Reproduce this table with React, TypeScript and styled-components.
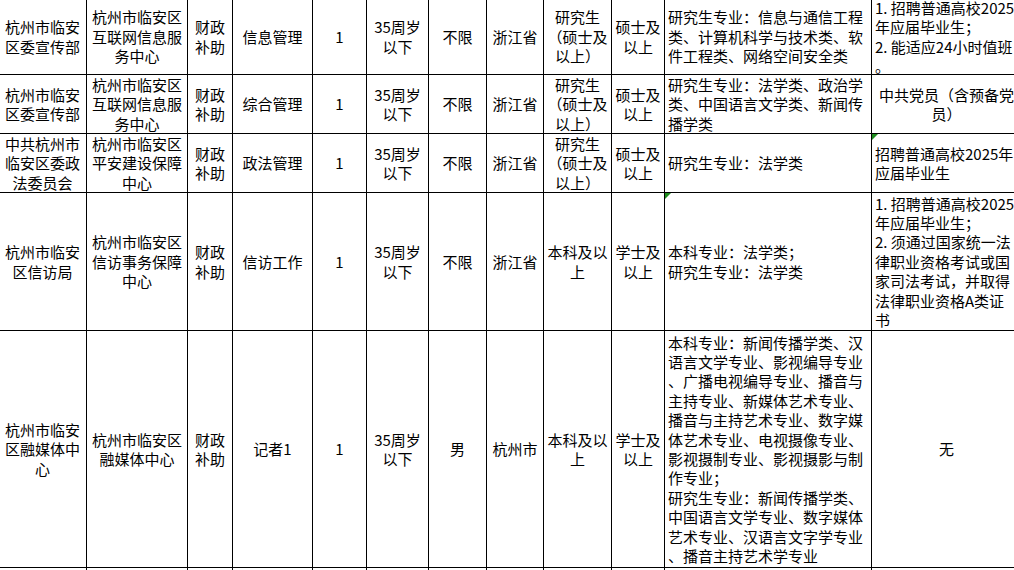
import React from 'react'
import styled, { createGlobalStyle } from 'styled-components'

const GlobalStyle = createGlobalStyle`
  html, body {
    margin: 0;
    padding: 0;
    background: #ffffff;
    overflow: hidden;
  }
  body {
    font-family: "Noto Sans CJK SC", "Noto Sans", sans-serif;
    color: #000000;
  }
`

const widths = [88, 101, 45, 80, 54, 62, 58, 57, 68, 53, 207, 150]

type Align = 'center' | 'left'

type CellData = {
  lines: string[]
  align?: Align
  flag?: boolean
}

type RowData = {
  height: number
  cells: CellData[]
}

const Viewport = styled.div`
  width: 1014px;
  height: 570px;
  overflow: hidden;
`

const Sheet = styled.table`
  border-collapse: collapse;
  table-layout: fixed;
  width: ${widths.reduce((a, b) => a + b, 0)}px;
  margin: -2px 0 0 -2px;
  font-size: 15px;
  line-height: 19.4px;
`

const Row = styled.tr<{ $height: number }>`
  height: ${(p) => p.$height}px;
`

const Cell = styled.td<{ $flag?: boolean }>`
  border: 1px solid #000000;
  padding: 0;
  position: relative;
  vertical-align: middle;

  &::before {
    content: '';
    display: ${(p) => (p.$flag ? 'block' : 'none')};
    position: absolute;
    top: 0;
    left: 0;
    width: 0;
    height: 0;
    border-top: 6px solid #1e8c1e;
    border-right: 6px solid transparent;
  }
`

const Box = styled.div<{ $height: number; $align: Align }>`
  height: ${(p) => p.$height - 1}px;
  overflow: hidden;
  display: flex;
  flex-direction: column;
  justify-content: center;
  align-items: ${(p) => (p.$align === 'left' ? 'flex-start' : 'center')};
  padding: 0 ${(p) => (p.$align === 'left' ? '3px' : '1px')};
`

const Line = styled.span`
  display: block;
  white-space: nowrap;
`

const std = (c4: string, extra: Partial<Record<'c7' | 'c8' | 'c9' | 'c10', string[]>> = {}): CellData[] => [
  { lines: ['财政', '补助'] },
  { lines: [c4] },
  { lines: ['1'] },
  { lines: ['35周岁', '以下'] },
  { lines: extra.c7 ?? ['不限'] },
  { lines: extra.c8 ?? ['浙江省'] },
  { lines: extra.c9 ?? ['研究生', '（硕士及', '以上）'] },
  { lines: extra.c10 ?? ['硕士及', '以上'] },
]

const rows: RowData[] = [
  {
    height: 76,
    cells: [
      { lines: ['杭州市临安', '区委宣传部'] },
      { lines: ['杭州市临安区', '互联网信息服', '务中心'] },
      ...std('信息管理'),
      {
        lines: ['研究生专业：信息与通信工程', '类、计算机科学与技术类、软', '件工程类、网络空间安全类'],
        align: 'left',
      },
      {
        lines: ['1. 招聘普通高校2025', '年应届毕业生；', '2. 能适应24小时值班', '。'],
        align: 'left',
      },
    ],
  },
  {
    height: 59,
    cells: [
      { lines: ['杭州市临安', '区委宣传部'] },
      { lines: ['杭州市临安区', '互联网信息服', '务中心'] },
      ...std('综合管理'),
      {
        lines: ['研究生专业：法学类、政治学', '类、中国语言文学类、新闻传', '播学类'],
        align: 'left',
      },
      { lines: ['中共党员（含预备党', '员）'] },
    ],
  },
  {
    height: 59,
    cells: [
      { lines: ['中共杭州市', '临安区委政', '法委员会'] },
      { lines: ['杭州市临安区', '平安建设保障', '中心'] },
      ...std('政法管理'),
      { lines: ['研究生专业：法学类'], align: 'left' },
      { lines: ['招聘普通高校2025年', '应届毕业生'], align: 'left', flag: true },
    ],
  },
  {
    height: 138,
    cells: [
      { lines: ['杭州市临安', '区信访局'] },
      { lines: ['杭州市临安区', '信访事务保障', '中心'] },
      ...std('信访工作', { c9: ['本科及以', '上'], c10: ['学士及', '以上'] }),
      { lines: ['本科专业：法学类；', '研究生专业：法学类'], align: 'left', flag: true },
      {
        lines: [
          '1. 招聘普通高校2025',
          '年应届毕业生；',
          '2. 须通过国家统一法',
          '律职业资格考试或国',
          '家司法考试，并取得',
          '法律职业资格A类证',
          '书',
        ],
        align: 'left',
      },
    ],
  },
  {
    height: 237,
    cells: [
      { lines: ['杭州市临安', '区融媒体中', '心'] },
      { lines: ['杭州市临安区', '融媒体中心'] },
      ...std('记者1', {
        c7: ['男'],
        c8: ['杭州市'],
        c9: ['本科及以', '上'],
        c10: ['学士及', '以上'],
      }),
      {
        lines: [
          '本科专业：新闻传播学类、汉',
          '语言文学专业、影视编导专业',
          '、广播电视编导专业、播音与',
          '主持专业、新媒体艺术专业、',
          '播音与主持艺术专业、数字媒',
          '体艺术专业、电视摄像专业、',
          '影视摄制专业、影视摄影与制',
          '作专业；',
          '研究生专业：新闻传播学类、',
          '中国语言文学专业、数字媒体',
          '艺术专业、汉语言文字学专业',
          '、播音主持艺术学专业',
        ],
        align: 'left',
      },
      { lines: ['无'] },
    ],
  },
  {
    height: 40,
    cells: widths.map(() => ({ lines: [] })),
  },
]

const App: React.FC = () => {
  return (
    <Viewport>
      <GlobalStyle />
      <Sheet>
        <colgroup>
          {widths.map((w, i) => (
            <col key={i} style={{ width: w }} />
          ))}
        </colgroup>
        <tbody>
          {rows.map((row, r) => (
            <Row key={r} $height={row.height}>
              {row.cells.map((cell, c) => (
                <Cell key={c} $flag={cell.flag}>
                  <Box $height={row.height} $align={cell.align ?? 'center'}>
                    {cell.lines.map((line, l) => (
                      <Line key={l}>{line}</Line>
                    ))}
                  </Box>
                </Cell>
              ))}
            </Row>
          ))}
        </tbody>
      </Sheet>
    </Viewport>
  )
}

export default App
